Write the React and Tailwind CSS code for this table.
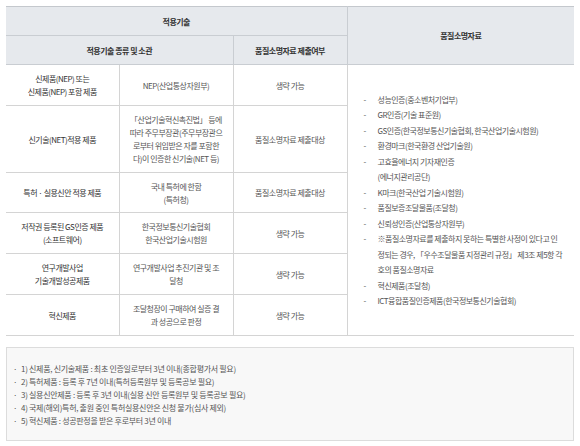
const rows = [
  { h: 'h-[41px]', name: ['신제품(NEP) 또는', '신제품(NEP) 포함 제품'], org: ['NEP(산업통상자원부)'], sub: '생략 가능' },
  { h: 'h-[67px]', name: ['신기술(NET)적용 제품'], org: ['「산업기술혁신촉진법」 등에', '따라 주무부장관(주무부장관으', '로부터 위임받은 자를 포함한', '다)이 인증한 신기술(NET 등)'], sub: '품질소명자료 제출대상' },
  { h: 'h-[40px]', name: ['특허 · 실용신안 적용 제품'], org: ['국내 특허에 한함', '(특허청)'], sub: '품질소명자료 제출대상' },
  { h: 'h-[41px]', name: ['저작권 등록된 GS인증 제품', '(소프트웨어)'], org: ['한국정보통신기술협회', '한국산업기술시험원'], sub: '생략 가능' },
  { h: 'h-[41px]', name: ['연구개발사업', '기술개발성공제품'], org: ['연구개발사업 추진기관 및 조', '달청'], sub: '생략 가능' },
  { h: 'h-[41px]', name: ['혁신제품'], org: ['조달청장이 구매하여 실증 결', '과 성공으로 판정'], sub: '생략 가능' },
]

const docs = [
  ['성능인증(중소벤처기업부)'],
  ['GR인증(기술 표준원)'],
  ['GS인증(한국정보통신기술협회, 한국산업기술시험원)'],
  ['환경마크(한국환경 산업기술원)'],
  ['고효율에너지 기자재인증', '(에너지관리공단)'],
  ['K마크(한국산업 기술시험원)'],
  ['품질보증조달물품(조달청)'],
  ['신뢰성인증(산업통상자원부)'],
  ['※품질소명자료를 제출하지 못하는 특별한 사정이 있다고 인', '정되는 경우, 「우수조달물품 지정관리 규정」 제3조 제5항 각', '호의 품질소명자료'],
  ['혁신제품(조달청)'],
  ['ICT융합품질인증제품(한국정보통신기술협회)'],
]

const notes = [
  '1) 신제품, 신기술제품 : 최초 인증일로부터 3년 이내(종합평가서 필요)',
  '2) 특허제품 : 등록 후 7년 이내(특허등록원부 및 등록공보 필요)',
  '3) 실용신안제품 : 등록 후 3년 이내(실용 신안 등록원부 및 등록공보 필요)',
  '4) 국제(해외)특허, 출원 중인 특허실용신안은 신청 불가(심사 제외)',
  '5) 혁신제품 : 성공판정을 받은 후로부터 3년 이내',
]

export default function App() {
  return (
    <div className="w-[580px] h-[446px] bg-white pt-[6px] px-[6px] text-[#555] font-['Noto_Sans_CJK_KR','Noto_Sans',sans-serif] text-[8px] tracking-[-0.5px] leading-[13px]">
      <table className="w-[568px] table-fixed border-collapse">
        <colgroup>
          <col className="w-[113px]" />
          <col className="w-[114px]" />
          <col className="w-[114px]" />
          <col className="w-[227px]" />
        </colgroup>
        <thead>
          <tr className="h-[29px] bg-[#e6e9ed] border-t border-[#c4c8cd]">
            <th colSpan={3} className="border-b border-[#c9cdd2] text-[#333] font-bold">적용기술</th>
            <th rowSpan={2} className="border-l border-b border-[#c9cdd2] text-[#333] font-bold">품질소명자료</th>
          </tr>
          <tr className="h-[29px] bg-[#e6e9ed]">
            <th colSpan={2} className="border-b border-[#c9cdd2] text-[#333] font-bold">적용기술 종류 및 소관</th>
            <th className="border-l border-b border-[#c9cdd2] text-[#333] font-bold">품질소명자료 제출여부</th>
          </tr>
        </thead>
        <tbody>
          {rows.map((r, i) => (
            <tr key={i} className={`${r.h} border-b border-[#d4d4d4]`}>
              <td className="text-center text-[#333] px-1">
                {r.name.map((l, j) => <div key={j}>{l}</div>)}
              </td>
              <td className="text-center border-l border-[#d4d4d4] px-1">
                {r.org.map((l, j) => <div key={j} className="whitespace-nowrap">{l}</div>)}
              </td>
              <td className="text-center border-l border-[#d4d4d4]">{r.sub}</td>
              {i === 0 && (
                <td rowSpan={6} className="border-l border-[#d4d4d4] pl-[16px] pr-1 align-middle">
                  <ul className="leading-[15.5px]">
                    {docs.map((d, j) => (
                      <li key={j} className="flex">
                        <span className="w-[14px] shrink-0">-</span>
                        <span>{d.map((l, k) => <div key={k} className="whitespace-nowrap">{l}</div>)}</span>
                      </li>
                    ))}
                  </ul>
                </td>
              )}
            </tr>
          ))}
        </tbody>
      </table>
      <div className="mt-[11px] w-[568px] h-[94px] bg-[#f8f8f8] border border-[#dcdcdc] flex flex-col justify-center pl-[6px] tracking-[-0.3px]">
        <ul>
          {notes.map((n, i) => (
            <li key={i} className="flex">
              <span className="w-[8px] shrink-0">·</span>
              <span>{n}</span>
            </li>
          ))}
        </ul>
      </div>
    </div>
  )
}
